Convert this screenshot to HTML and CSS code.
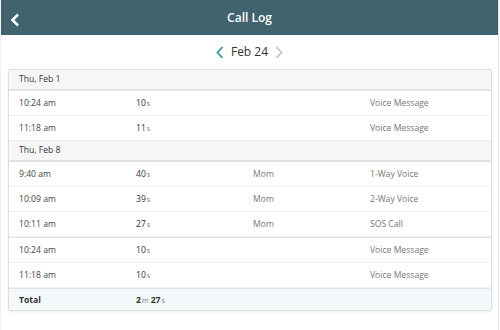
FILE: index.html
```html
<!DOCTYPE html>
<html lang="en">
<head>
    <meta charset="UTF-8">
    <meta name="viewport" content="width=device-width, initial-scale=1.0">
    <title>Call Log</title>
    <link rel="stylesheet" href="styles.css">
</head>
<body>
    <div class="app">
        <div class="topbar">
            <span class="back">
                <svg width="10" height="14" viewBox="0 0 10 14"><path d="M8 1.5L2.5 7L8 12.5" fill="none" stroke="#fff" stroke-width="2.6"/></svg>
            </span>
            <h1>Call Log</h1>
        </div>
        <div class="month">
            <svg class="prev" width="8" height="13" viewBox="0 0 8 13"><path d="M6.5 1L1.5 6.5L6.5 12" fill="none" stroke="#2f9a97" stroke-width="1.8"/></svg>
            <span>Feb 24</span>
            <svg class="next" width="8" height="13" viewBox="0 0 8 13"><path d="M1.5 1L6.5 6.5L1.5 12" fill="none" stroke="#c4c7c9" stroke-width="1.8"/></svg>
        </div>
        <div class="log">
            <div class="day">Thu, Feb 1</div>
            <div class="row">
                <span class="time">10:24 am</span><span class="dur">10<small>s</small></span><span class="who"></span><span class="kind">Voice Message</span>
            </div>
            <div class="row">
                <span class="time">11:18 am</span><span class="dur">11<small>s</small></span><span class="who"></span><span class="kind">Voice Message</span>
            </div>
            <div class="day">Thu, Feb 8</div>
            <div class="row">
                <span class="time">9:40 am</span><span class="dur">40<small>s</small></span><span class="who">Mom</span><span class="kind">1-Way Voice</span>
            </div>
            <div class="row">
                <span class="time">10:09 am</span><span class="dur">39<small>s</small></span><span class="who">Mom</span><span class="kind">2-Way Voice</span>
            </div>
            <div class="row">
                <span class="time">10:11 am</span><span class="dur">27<small>s</small></span><span class="who">Mom</span><span class="kind">SOS Call</span>
            </div>
            <div class="row split">
                <span class="time">10:24 am</span><span class="dur">10<small>s</small></span><span class="who"></span><span class="kind">Voice Message</span>
            </div>
            <div class="row">
                <span class="time">11:18 am</span><span class="dur">10<small>s</small></span><span class="who"></span><span class="kind">Voice Message</span>
            </div>
            <div class="row total">
                <span class="time">Total</span><span class="dur">2<small>m</small> 27<small>s</small></span>
            </div>
        </div>
    </div>
</body>
</html>
```

FILE: styles.css
```css
body {
    margin: 0;
    font-family: "Open Sans", "Liberation Sans", sans-serif;
    background: #fff;
}
.app {
    width: 497px;
    height: 330px;
    border-left: 1px solid #f1f1f1;
    border-right: 1px solid #e3e3e3;
}
.topbar {
    height: 35px;
    background-color: #40636e;
    display: flex;
    align-items: center;
    justify-content: center;
    position: relative;
}
.topbar h1 {
    margin: 0;
    color: #fff;
    font-size: 12px;
    font-weight: 600;
}
.back {
    position: absolute;
    left: 9px;
    top: 10px;
}
.month {
    height: 34px;
    display: flex;
    align-items: center;
    justify-content: center;
    gap: 7px;
    font-size: 12px;
    color: #333;
}
.month span {
    padding-bottom: 1px;
}
.log {
    margin: 0 6px 0 7px;
    border: 1px solid #dedede;
    border-radius: 2px;
    box-shadow: 0 1px 3px rgba(0, 0, 0, 0.08);
}
.day {
    height: 19px;
    line-height: 19px;
    padding-left: 10px;
    background-color: #f6f6f8;
    border-bottom: 2px solid #e3e3e3;
    font-size: 8.6px;
    color: #333;
}
.row {
    display: grid;
    grid-template-columns: 117px 117px 117px 117px;
    height: 24px;
    align-items: center;
    padding-left: 10px;
    border-bottom: 1px solid #f0f0f0;
    font-size: 8.6px;
}
.row.split {
    border-top: 1px solid #e3e3e3;
}
.time {
    color: #444;
}
.dur {
    color: #333;
}
.dur small {
    font-size: 7px;
    color: #777;
    margin-left: 1px;
}
.who, .kind {
    color: #777;
}
.row.total {
    height: 21px;
    border-top: 1px solid #e3e3e3;
    border-bottom: none;
    background-color: #f3f9fa;
    font-weight: 700;
}
.row.total .time,
.row.total .dur {
    color: #333;
}
.row.total small {
    font-weight: 400;
}
```
